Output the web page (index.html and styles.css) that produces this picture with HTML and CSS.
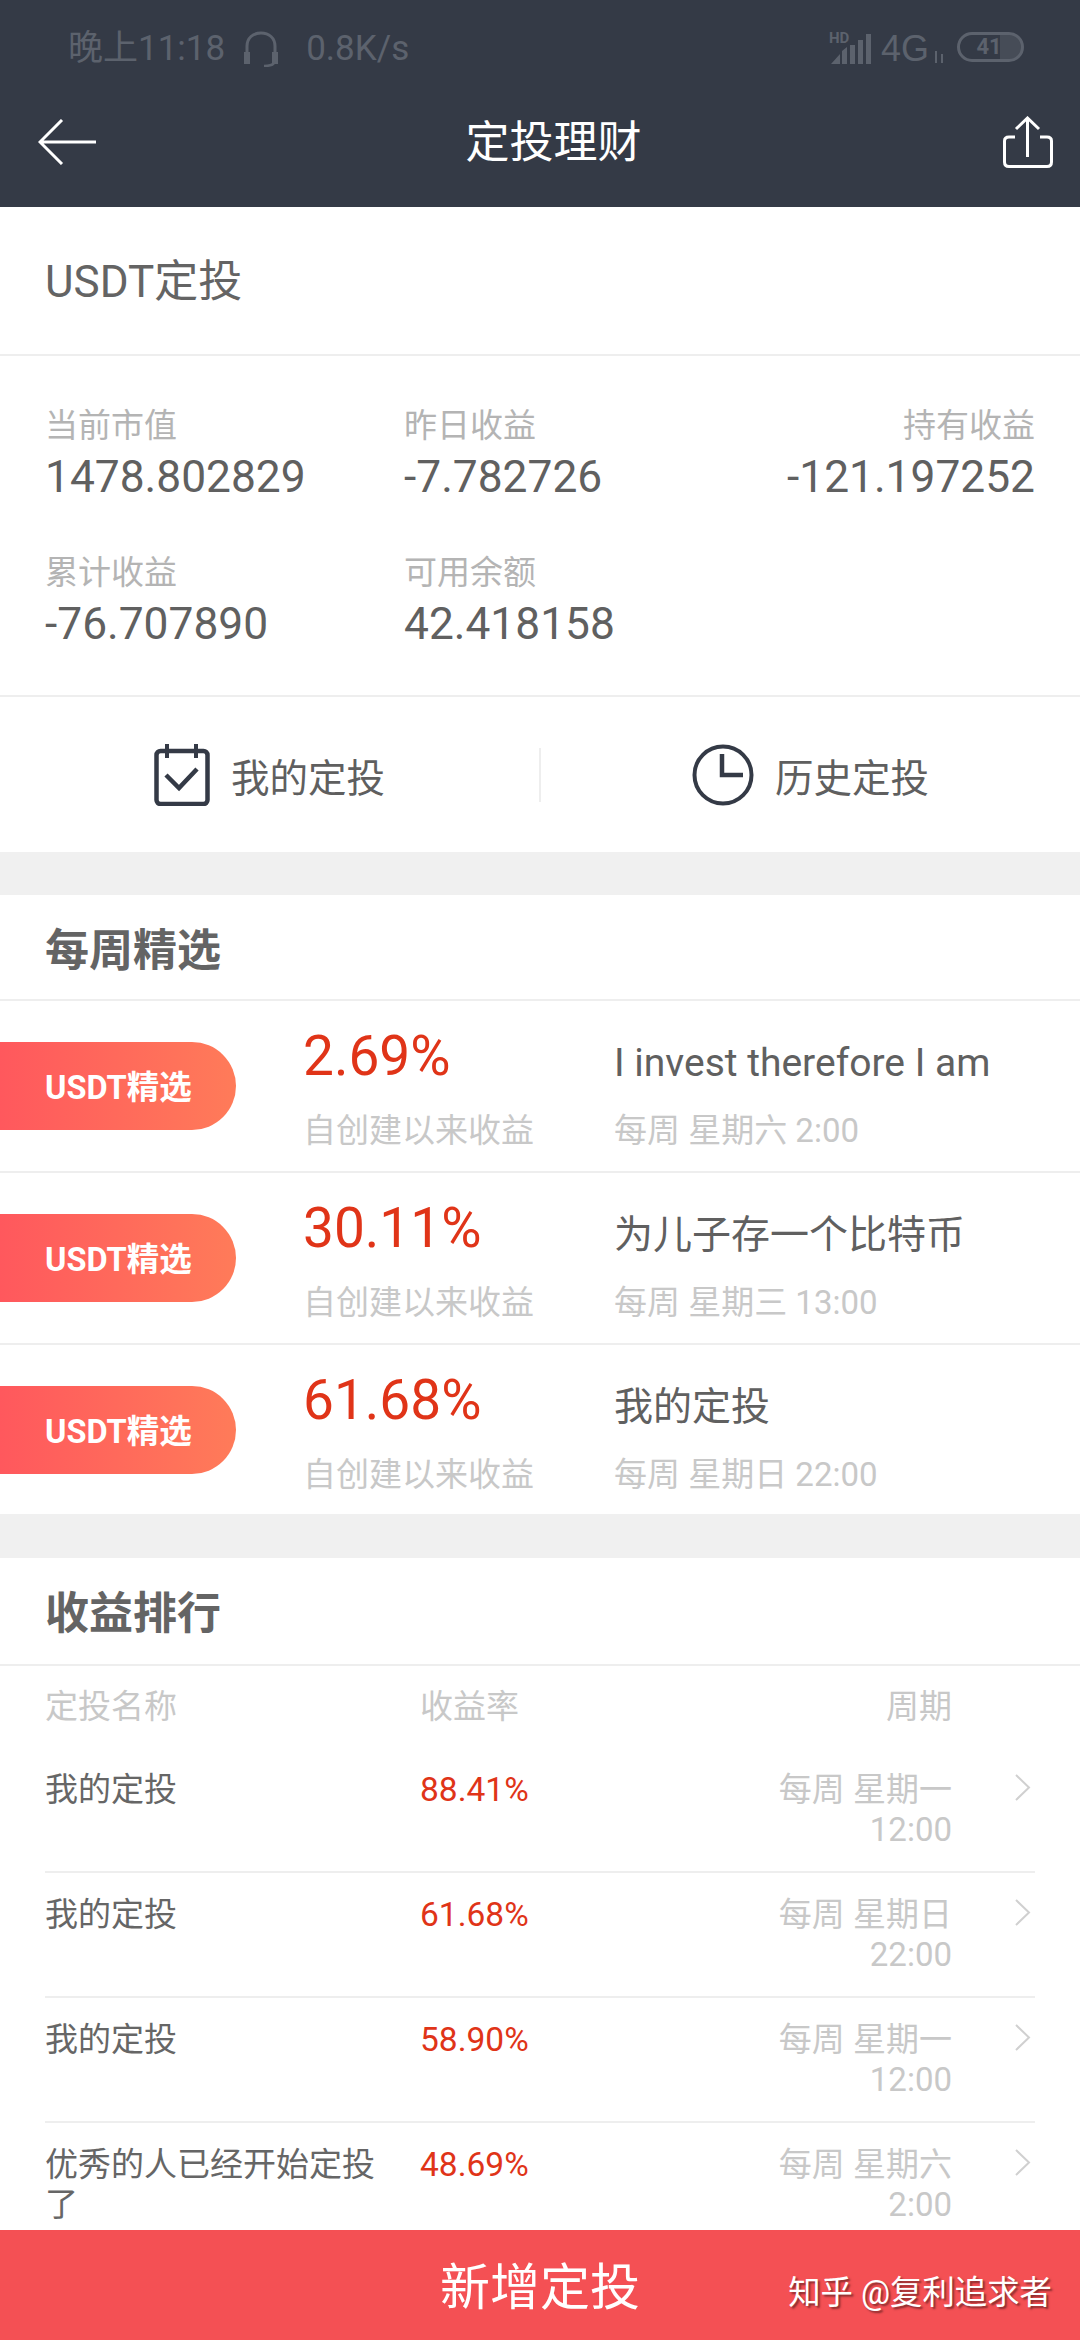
FILE: index.html
```html
<!DOCTYPE html>
<html lang="zh-CN">

<head>
    <meta charset="UTF-8">
    <meta name="viewport" content="width=device-width, initial-scale=1.0">
    <title>定投理财</title>
    <link rel="stylesheet" href="styles.css">
</head>

<body>
    <div class="phone">
        <header class="top">
            <div class="status">
                <div class="status-left">
                    <span class="clock-text">晚上11:18</span>
                    <svg class="headset" width="36" height="36" viewBox="0 0 36 36" fill="none" stroke="#5c626d" stroke-width="3">
                        <path d="M4 24V15C4 7 10 2 18 2S32 7 32 15V24"/>
                        <path d="M1 21H7V33H1ZM29 21H35V33H29Z" fill="#5c626d" stroke="none"/>
                        <path d="M31 32Q29 35 21 35" stroke-width="2.5"/>
                    </svg>
                    <span class="speed">0.8K/s</span>
                </div>
                <div class="status-right">
                    <div class="signal">
                        <span class="hd">HD</span>
                        <svg width="44" height="30" viewBox="0 0 44 30" fill="#5c626d">
                            <path d="M2 30L11 20V30ZM13 17L18 13V30H13ZM21 11H26V30H21ZM29 6H34V30H29ZM37 0H42V30H37Z"/>
                        </svg>
                    </div>
                    <span class="net">4G</span>
                    <svg class="updown" width="12" height="14" viewBox="0 0 12 14" stroke="#5c626d" stroke-width="2" fill="none">
                        <path d="M3 1V13M9 4V13"/>
                    </svg>
                    <div class="battery"><span class="battery-num">41</span></div>
                </div>
            </div>
            <div class="nav">
                <svg width="58" height="46" viewBox="0 0 58 46" fill="none" stroke="#fff" stroke-width="3">
                    <path d="M24 1L2 23L24 45M2 23H58"/>
                </svg>
                <h1 class="nav-title">定投理财</h1>
                <svg width="50" height="52" viewBox="0 0 50 52" fill="none" stroke="#fff" stroke-width="3">
                    <path d="M12 21H6Q1.500 21 1.500 25V46Q1.500 50.500 6 50.500H44Q48.500 50.500 48.500 46V25Q48.500 21 44 21H37"/>
                    <path d="M24.500 2V41M13 13L24.500 2L36 13"/>
                </svg>
            </div>
        </header>

        <main class="content">
            <div class="fund-name">USDT定投</div>

            <section class="stats">
                <div class="stat">
                    <p class="stat-label">当前市值</p>
                    <p class="stat-value">1478.802829</p>
                </div>
                <div class="stat">
                    <p class="stat-label">昨日收益</p>
                    <p class="stat-value">-7.782726</p>
                </div>
                <div class="stat stat-end">
                    <p class="stat-label">持有收益</p>
                    <p class="stat-value">-121.197252</p>
                </div>
                <div class="stat">
                    <p class="stat-label">累计收益</p>
                    <p class="stat-value">-76.707890</p>
                </div>
                <div class="stat">
                    <p class="stat-label">可用余额</p>
                    <p class="stat-value">42.418158</p>
                </div>
            </section>

            <section class="actions">
                <div class="action">
                    <svg width="56" height="62" viewBox="0 0 56 62" fill="none" stroke="#343a46" stroke-width="4.500">
                        <rect x="2.500" y="7" width="51" height="53" rx="4"/>
                        <path d="M13 0V14M42 0V14" stroke-width="4"/>
                        <path d="M12 31L25 44L43 25" stroke-width="4.500"/>
                    </svg>
                    <span>我的定投</span>
                </div>
                <div class="action-line"></div>
                <div class="action">
                    <svg width="62" height="62" viewBox="0 0 62 62" fill="none" stroke="#343a46" stroke-width="4">
                        <circle cx="31" cy="31" r="28.500"/>
                        <path d="M30 10V31H51" stroke-width="4.500"/>
                    </svg>
                    <span>历史定投</span>
                </div>
            </section>

            <section class="block">
                <h2 class="block-title">每周精选</h2>
                <div class="pick">
                    <div class="pill">USDT精选</div>
                    <div class="pick-rate">
                        <p class="rate-big">2.69%</p>
                        <p class="muted">自创建以来收益</p>
                    </div>
                    <div class="pick-info">
                        <p class="pick-name">I invest therefore I am</p>
                        <p class="muted">每周 星期六 2:00</p>
                    </div>
                </div>
                <div class="pick">
                    <div class="pill">USDT精选</div>
                    <div class="pick-rate">
                        <p class="rate-big">30.11%</p>
                        <p class="muted">自创建以来收益</p>
                    </div>
                    <div class="pick-info">
                        <p class="pick-name">为儿子存一个比特币</p>
                        <p class="muted">每周 星期三 13:00</p>
                    </div>
                </div>
                <div class="pick pick-last">
                    <div class="pill">USDT精选</div>
                    <div class="pick-rate">
                        <p class="rate-big">61.68%</p>
                        <p class="muted">自创建以来收益</p>
                    </div>
                    <div class="pick-info">
                        <p class="pick-name">我的定投</p>
                        <p class="muted">每周 星期日 22:00</p>
                    </div>
                </div>
            </section>

            <section class="block">
                <h2 class="block-title block-title-rank">收益排行</h2>
                <div class="rank-head">
                    <span>定投名称</span>
                    <span>收益率</span>
                    <span class="rank-cycle">周期</span>
                </div>
                <div class="rank">
                    <span class="rank-name">我的定投</span>
                    <span class="rank-rate">88.41%</span>
                    <span class="rank-cycle">每周 星期一 12:00</span>
                    <svg class="chev" width="17" height="27" viewBox="0 0 17 27" fill="none" stroke="#d0d0d0" stroke-width="2"><path d="M2 1L15 13.500L2 26"/></svg>
                </div>
                <div class="rank">
                    <span class="rank-name">我的定投</span>
                    <span class="rank-rate">61.68%</span>
                    <span class="rank-cycle">每周 星期日 22:00</span>
                    <svg class="chev" width="17" height="27" viewBox="0 0 17 27" fill="none" stroke="#d0d0d0" stroke-width="2"><path d="M2 1L15 13.500L2 26"/></svg>
                </div>
                <div class="rank">
                    <span class="rank-name">我的定投</span>
                    <span class="rank-rate">58.90%</span>
                    <span class="rank-cycle">每周 星期一 12:00</span>
                    <svg class="chev" width="17" height="27" viewBox="0 0 17 27" fill="none" stroke="#d0d0d0" stroke-width="2"><path d="M2 1L15 13.500L2 26"/></svg>
                </div>
                <div class="rank">
                    <span class="rank-name">优秀的人已经开始定投了</span>
                    <span class="rank-rate">48.69%</span>
                    <span class="rank-cycle">每周 星期六 2:00</span>
                    <svg class="chev" width="17" height="27" viewBox="0 0 17 27" fill="none" stroke="#d0d0d0" stroke-width="2"><path d="M2 1L15 13.500L2 26"/></svg>
                </div>
            </section>
        </main>

        <footer class="add-bar">
            <span class="add-text">新增定投</span>
            <span class="mark">知乎 @复利追求者</span>
        </footer>
    </div>
</body>

</html>
```

FILE: styles.css
```css
* {
    margin: 0;
    padding: 0;
    box-sizing: border-box;
}

body {
    font-family: Roboto, "Noto Sans CJK SC", sans-serif;
    background-color: #f0f0f0;
}

.phone {
    width: 1080px;
    height: 2340px;
    display: flex;
    flex-direction: column;
    overflow: hidden;
    position: relative;
}

/* header */
.top {
    height: 207px;
    background-color: #343a46;
    flex-shrink: 0;
}

.status {
    height: 96px;
    padding: 27px 56px 0 68px;
    display: flex;
    justify-content: space-between;
    color: #5c626d;
    font-size: 35px;
}

.status-left {
    display: flex;
    align-items: flex-start;
    line-height: 44px;
}

.headset {
    margin: 4px 27px 0 18px;
}

.status-right {
    display: flex;
    align-items: flex-start;
    padding-top: 5px;
}

.signal {
    position: relative;
    width: 44px;
    height: 30px;
}

/* sits on top of the short signal bars */
.hd {
    position: absolute;
    left: 0;
    top: -2px;
    font-size: 15px;
    line-height: 16px;
    font-weight: 700;
}

.net {
    font-size: 36px;
    line-height: 34px;
    margin-left: 8px;
    font-family: "Liberation Sans", sans-serif;
}

.updown {
    margin: 18px 12px 0 4px;
}

.battery {
    width: 67px;
    height: 30px;
    border: 3px solid #5c626d;
    border-radius: 15px;
    text-align: center;
    background: linear-gradient(90deg, transparent 66%, #464c57 66%);
    overflow: hidden;
}

.battery-num {
    display: block;
    font-size: 22px;
    line-height: 24px;
    font-weight: 700;
    width: 50px;
    margin-left: 4px;
}

.nav {
    height: 111px;
    padding: 0 27px 20px 38px;
    display: flex;
    justify-content: space-between;
    align-items: center;
}

.nav-title {
    color: #fff;
    font-size: 44px;
    font-weight: 400;
    margin-left: 8px;
    margin-bottom: 6px;
}

/* top part */
.content {
    flex: 1;
    overflow: hidden;
}

.fund-name {
    height: 149px;
    background-color: #fff;
    border-bottom: 2px solid #eeeeee;
    padding-left: 45px;
    font-size: 44px;
    line-height: 150px;
    color: #646464;
}

.stats {
    height: 341px;
    background-color: #fff;
    border-bottom: 2px solid #eeeeee;
    padding: 50px 45px 0;
    display: grid;
    grid-template-columns: 359px 1fr 1fr;
    grid-auto-rows: 102px;
    row-gap: 45px;
}

.stat-label {
    font-size: 33px;
    line-height: 40px;
    color: #b4b4b4;
}

.stat-value {
    font-size: 44.300px;
    line-height: 62px;
    color: #606060;
}

.stat-end {
    text-align: right;
}

.actions {
    height: 155px;
    background-color: #fff;
    display: flex;
    align-items: center;
    margin-bottom: 43px;
}

.action {
    flex: 1;
    display: flex;
    align-items: center;
    justify-content: center;
    gap: 21px;
    font-size: 38.500px;
    color: #5f5f5f;
}

.action-line {
    width: 2px;
    height: 54px;
    background-color: #eeeeee;
}

/* sections */
.block {
    background-color: #fff;
    margin-bottom: 44px;
}

.block-title {
    height: 106px;
    border-bottom: 2px solid #eeeeee;
    padding-left: 45px;
    font-size: 44px;
    line-height: 112px;
    font-weight: 700;
    color: #646464;
}

.block-title-rank {
    height: 108px;
}

.pick {
    height: 172px;
    border-bottom: 2px solid #eeeeee;
    display: flex;
    align-items: center;
}

.pick-last {
    height: 169px;
    border-bottom: 0;
}

.pill {
    width: 236px;
    height: 88px;
    border-radius: 0 44px 44px 0;
    background: linear-gradient(90deg, #ff585d, #ff7b59);
    color: #fff;
    font-size: 32.500px;
    font-weight: 700;
    line-height: 92px;
    padding-left: 45px;
    flex-shrink: 0;
}

.pick-rate {
    width: 311px;
    margin-left: 67px;
    padding-top: 6px;
}

.rate-big {
    font-size: 55px;
    line-height: 62px;
    color: #e03418;
    margin-bottom: 22px;
}

.muted {
    font-size: 33px;
    line-height: 44px;
    color: #c8c8c8;
}

.pick-info {
    padding-top: 13px;
}

.pick-name {
    font-size: 39px;
    line-height: 62px;
    color: #606060;
    margin-bottom: 15px;
}

/* rank table */
.rank-head {
    height: 82px;
    margin: 0 45px;
    padding-bottom: 6px;
    display: grid;
    grid-template-columns: 375px 1fr 200px 83px;
    align-items: center;
    font-size: 33px;
    color: #c8c8c8;
}

.rank {
    margin: 0 45px;
    padding: 22px 0 21px;
    border-bottom: 2px solid #eeeeee;
    display: grid;
    grid-template-columns: 375px 1fr 200px 83px;
    font-size: 33px;
    line-height: 40px;
    min-height: 125px;
}

.rank-name {
    color: #666;
    padding-right: 30px;
}

.rank-rate {
    color: #e03418;
    font-size: 33.500px;
}

.rank-cycle {
    text-align: right;
    color: #c8c8c8;
}

.chev {
    margin-left: 62px;
    margin-top: 4px;
}

/* bottom button */
.add-bar {
    position: absolute;
    left: 0;
    right: 0;
    bottom: 0;
    height: 110px;
    padding-bottom: 5px;
    background-color: #f45054;
    color: #fff;
    display: flex;
    align-items: center;
    justify-content: center;
    font-size: 50px;
}

.mark {
    position: absolute;
    right: 28px;
    top: 42px;
    font-size: 32.400px;
    line-height: 42px;
    text-shadow: 2px 2px 2px rgba(90, 30, 30, 0.7);
}
```
